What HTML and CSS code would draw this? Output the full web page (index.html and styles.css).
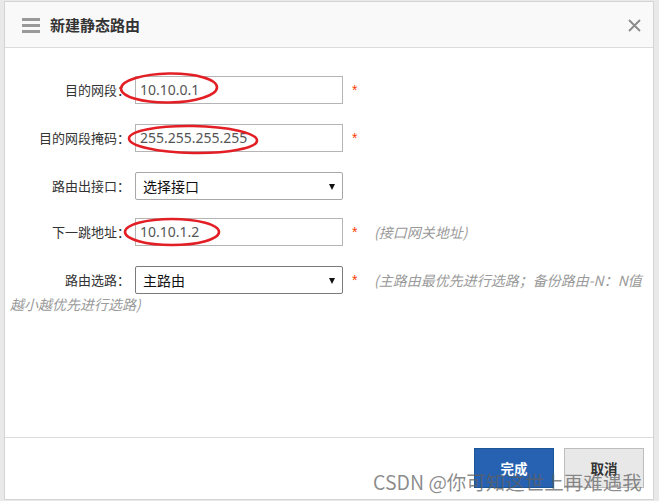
FILE: index.html
```html
<!DOCTYPE html>
<html lang="zh-CN">
<head>
<meta charset="utf-8">
<title>新建静态路由</title>
<link rel="stylesheet" href="styles.css">
</head>
<body>
<div class="page">
  <div class="dialog">
    <div class="dlg-head">
      <span class="menu-icon"><i></i><i></i><i></i></span>
      <span class="dlg-title">新建静态路由</span>
      <svg class="close-icon" width="13" height="13" viewBox="0 0 13 13"><path d="M1 1 L12 12 M12 1 L1 12" stroke="#8a8a8a" stroke-width="1.8" fill="none"/></svg>
    </div>
    <div class="dlg-body">
      <div class="row">
        <span class="lbl">目的网段：</span><span class="field">10.10.0.1</span><span class="star">*</span>
      </div>
      <div class="row">
        <span class="lbl">目的网段掩码：</span><span class="field">255.255.255.255</span><span class="star">*</span>
      </div>
      <div class="row row-tight">
        <span class="lbl">路由出接口：</span><span class="field sel">选择接口<b class="caret"></b></span>
      </div>
      <div class="row">
        <span class="lbl">下一跳地址：</span><span class="field">10.10.1.2</span><span class="star">*</span><span class="hint">(接口网关地址)</span>
      </div>
      <div class="row">
        <span class="lbl">路由选路：</span><span class="field sel dark">主路由<b class="caret"></b></span><span class="star">*</span><span class="hint">(主路由最优先进行选路；备份路由-N：N值越小越优先进行选路)</span>
      </div>
    </div>
    <div class="dlg-foot">
      <span class="btn btn-primary">完成</span>
      <span class="btn btn-default">取消</span>
    </div>
  </div>
  <svg class="marks" width="659" height="501" viewBox="0 0 659 501">
    <g fill="none" stroke="#e31f26" stroke-width="2.6">
      <ellipse cx="169" cy="88" rx="48" ry="14.5" transform="rotate(-1 169 88)"/>
      <ellipse cx="193" cy="139.5" rx="64" ry="13.5" transform="rotate(1 193 139.5)"/>
      <ellipse cx="172" cy="232" rx="47" ry="13"/>
    </g>
  </svg>
  <div class="watermark">CSDN @你可知这世上再难遇我</div>
</div>
</body>
</html>
```
FILE: styles.css
```css
html, body {
  margin: 0;
  padding: 0;
  background: #e9e9e9;
}
.page {
  position: relative;
  width: 659px;
  height: 501px;
  overflow: hidden;
  padding: 1px 0 0 4px;
  box-sizing: border-box;
  font-family: "Noto Sans CJK SC", "Noto Sans", sans-serif;
}
.dialog {
  width: 650px;
  height: 499px;
  box-sizing: border-box;
  border: 1px solid #d4d4d4;
  background: #fff;
  display: flex;
  flex-direction: column;
}
.dlg-head {
  height: 46px;
  box-sizing: border-box;
  background: #f9f9f9;
  border-bottom: 1px solid #dcdcdc;
  display: flex;
  align-items: center;
  padding: 0 12px 0 17px;
}
.menu-icon {
  display: flex;
  flex-direction: column;
  gap: 3px;
  width: 18px;
  margin-top: 2px;
}
.menu-icon i {
  display: block;
  height: 3px;
  background: #999;
}
.dlg-title {
  margin-left: 10px;
  font-size: 15px;
  font-weight: bold;
  color: #333;
  flex: 1;
}
.close-icon {
  display: block;
  margin-top: 2px;
}
.dlg-body {
  flex: 1;
  padding: 28px 0 0 5px;
  line-height: 18px;
  font-size: 13px;
}
.row {
  margin-bottom: 20px;
}
.row-tight {
  margin-bottom: 18px;
}
.row > * {
  vertical-align: middle;
}
.lbl {
  display: inline-block;
  width: 120px;
  height: 28px;
  line-height: 28px;
  text-align: right;
  margin-right: 5px;
  color: #333;
  font-size: 13px;
}
.field {
  display: inline-block;
  box-sizing: border-box;
  width: 208px;
  height: 28px;
  line-height: 26px;
  border: 1px solid #b5b5b5;
  padding: 0 4px;
  font-family: "Noto Sans", "Noto Sans CJK SC", sans-serif;
  font-size: 14px;
  color: #555;
  position: relative;
}
.field.sel {
  color: #111;
  padding-left: 7px;
  font-family: "Noto Sans CJK SC", sans-serif;
  border-color: #a8a8a8;
  border-radius: 2px;
}
.field.sel.dark {
  border-color: #7a7a7a;
}
.caret {
  position: absolute;
  right: 7px;
  top: 11px;
  width: 0;
  height: 0;
  border-left: 3.5px solid transparent;
  border-right: 3.5px solid transparent;
  border-top: 6px solid #111;
}
.star {
  display: inline-block;
  margin-left: 9px;
  color: #ff3a00;
  font-family: "Liberation Sans", sans-serif;
  font-size: 14px;
  height: 28px;
  line-height: 28px;
  width: 7px;
}
.hint {
  margin-left: 15px;
  font-style: italic;
  color: #9a9a9a;
  font-size: 14px;
}
.dlg-foot {
  height: 62px;
  box-sizing: border-box;
  border-top: 1px solid #dcdcdc;
  display: flex;
  justify-content: flex-end;
  align-items: flex-start;
  gap: 10px;
  padding: 10px 9px 0 0;
}
.btn {
  display: flex;
  align-items: center;
  justify-content: center;
  box-sizing: border-box;
  width: 80px;
  height: 40px;
  font-size: 13.5px;
  font-weight: bold;
}
.btn-primary {
  background: #2762b2;
  border: 1px solid #1d5596;
  color: #fff;
}
.btn-default {
  background: #e8e8e8;
  border: 1px solid #bdbdbd;
  color: #333;
}
.marks {
  position: absolute;
  left: 0;
  top: 0;
  pointer-events: none;
}
.watermark {
  position: absolute;
  left: 373px;
  top: 469px;
  font-family: "Noto Sans CJK SC", sans-serif;
  font-size: 19.5px;
  line-height: 26px;
  color: rgba(95, 95, 95, 0.72);
  white-space: nowrap;
}
```
